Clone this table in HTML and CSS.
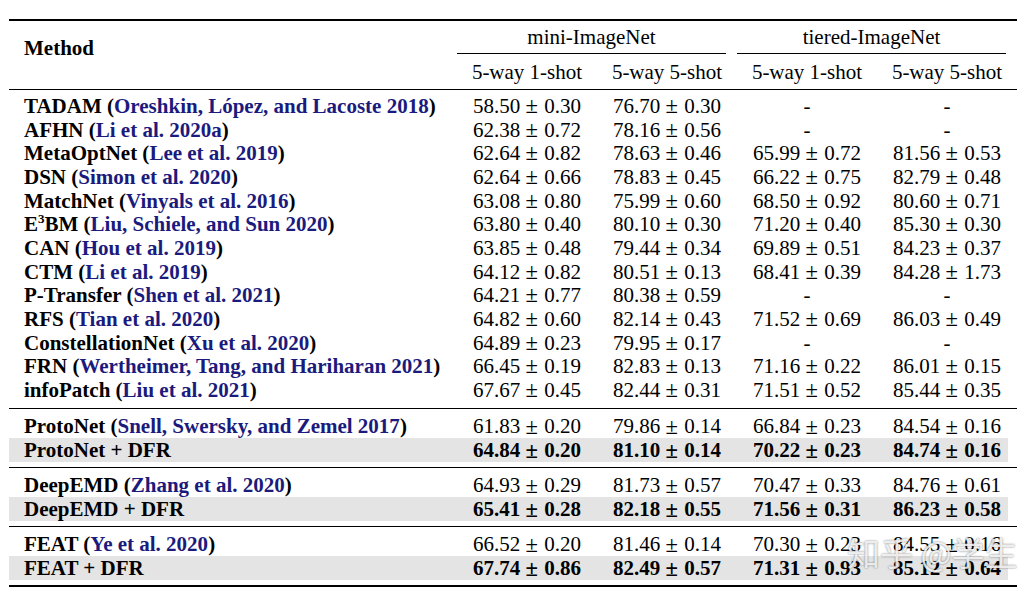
FILE: index.html
```html
<!DOCTYPE html>
<html>
<head>
<meta charset="utf-8">
<link rel="stylesheet" href="styles.css">
</head>
<body>
<div class="table">
  <div class="rule thick"></div>
  <div class="head">
    <div class="method">Method</div>
    <div class="grp grp-mini">mini-ImageNet</div>
    <div class="grp grp-tiered">tiered-ImageNet</div>
    <div class="sub">5-way 1-shot</div>
    <div class="sub">5-way 5-shot</div>
    <div class="sub">5-way 1-shot</div>
    <div class="sub">5-way 5-shot</div>
  </div>
  <div class="rule"></div>
  <div class="section main">
    <div class="row"><div class="m">TADAM (<span class="cite">Oreshkin, López, and Lacoste 2018</span>)</div><div class="v">58.50<span class="pm">±</span>0.30</div><div class="v">76.70<span class="pm">±</span>0.30</div><div class="v">-</div><div class="v">-</div></div>
    <div class="row"><div class="m">AFHN (<span class="cite">Li et al. 2020a</span>)</div><div class="v">62.38<span class="pm">±</span>0.72</div><div class="v">78.16<span class="pm">±</span>0.56</div><div class="v">-</div><div class="v">-</div></div>
    <div class="row"><div class="m">MetaOptNet (<span class="cite">Lee et al. 2019</span>)</div><div class="v">62.64<span class="pm">±</span>0.82</div><div class="v">78.63<span class="pm">±</span>0.46</div><div class="v">65.99<span class="pm">±</span>0.72</div><div class="v">81.56<span class="pm">±</span>0.53</div></div>
    <div class="row"><div class="m">DSN (<span class="cite">Simon et al. 2020</span>)</div><div class="v">62.64<span class="pm">±</span>0.66</div><div class="v">78.83<span class="pm">±</span>0.45</div><div class="v">66.22<span class="pm">±</span>0.75</div><div class="v">82.79<span class="pm">±</span>0.48</div></div>
    <div class="row"><div class="m">MatchNet (<span class="cite">Vinyals et al. 2016</span>)</div><div class="v">63.08<span class="pm">±</span>0.80</div><div class="v">75.99<span class="pm">±</span>0.60</div><div class="v">68.50<span class="pm">±</span>0.92</div><div class="v">80.60<span class="pm">±</span>0.71</div></div>
    <div class="row"><div class="m">E<sup>3</sup>BM (<span class="cite">Liu, Schiele, and Sun 2020</span>)</div><div class="v">63.80<span class="pm">±</span>0.40</div><div class="v">80.10<span class="pm">±</span>0.30</div><div class="v">71.20<span class="pm">±</span>0.40</div><div class="v">85.30<span class="pm">±</span>0.30</div></div>
    <div class="row"><div class="m">CAN (<span class="cite">Hou et al. 2019</span>)</div><div class="v">63.85<span class="pm">±</span>0.48</div><div class="v">79.44<span class="pm">±</span>0.34</div><div class="v">69.89<span class="pm">±</span>0.51</div><div class="v">84.23<span class="pm">±</span>0.37</div></div>
    <div class="row"><div class="m">CTM (<span class="cite">Li et al. 2019</span>)</div><div class="v">64.12<span class="pm">±</span>0.82</div><div class="v">80.51<span class="pm">±</span>0.13</div><div class="v">68.41<span class="pm">±</span>0.39</div><div class="v">84.28<span class="pm">±</span>1.73</div></div>
    <div class="row"><div class="m">P-Transfer (<span class="cite">Shen et al. 2021</span>)</div><div class="v">64.21<span class="pm">±</span>0.77</div><div class="v">80.38<span class="pm">±</span>0.59</div><div class="v">-</div><div class="v">-</div></div>
    <div class="row"><div class="m">RFS (<span class="cite">Tian et al. 2020</span>)</div><div class="v">64.82<span class="pm">±</span>0.60</div><div class="v">82.14<span class="pm">±</span>0.43</div><div class="v">71.52<span class="pm">±</span>0.69</div><div class="v">86.03<span class="pm">±</span>0.49</div></div>
    <div class="row"><div class="m">ConstellationNet (<span class="cite">Xu et al. 2020</span>)</div><div class="v">64.89<span class="pm">±</span>0.23</div><div class="v">79.95<span class="pm">±</span>0.17</div><div class="v">-</div><div class="v">-</div></div>
    <div class="row"><div class="m">FRN (<span class="cite">Wertheimer, Tang, and Hariharan 2021</span>)</div><div class="v">66.45<span class="pm">±</span>0.19</div><div class="v">82.83<span class="pm">±</span>0.13</div><div class="v">71.16<span class="pm">±</span>0.22</div><div class="v">86.01<span class="pm">±</span>0.15</div></div>
    <div class="row"><div class="m">infoPatch (<span class="cite">Liu et al. 2021</span>)</div><div class="v">67.67<span class="pm">±</span>0.45</div><div class="v">82.44<span class="pm">±</span>0.31</div><div class="v">71.51<span class="pm">±</span>0.52</div><div class="v">85.44<span class="pm">±</span>0.35</div></div>
  </div>
  <div class="rule"></div>
  <div class="section pair">
    <div class="row"><div class="m">ProtoNet (<span class="cite">Snell, Swersky, and Zemel 2017</span>)</div><div class="v">61.83<span class="pm">±</span>0.20</div><div class="v">79.86<span class="pm">±</span>0.14</div><div class="v">66.84<span class="pm">±</span>0.23</div><div class="v">84.54<span class="pm">±</span>0.16</div></div>
    <div class="row ours"><div class="m">ProtoNet + DFR</div><div class="v">64.84<span class="pm">±</span>0.20</div><div class="v">81.10<span class="pm">±</span>0.14</div><div class="v">70.22<span class="pm">±</span>0.23</div><div class="v">84.74<span class="pm">±</span>0.16</div></div>
  </div>
  <div class="rule"></div>
  <div class="section pair">
    <div class="row"><div class="m">DeepEMD (<span class="cite">Zhang et al. 2020</span>)</div><div class="v">64.93<span class="pm">±</span>0.29</div><div class="v">81.73<span class="pm">±</span>0.57</div><div class="v">70.47<span class="pm">±</span>0.33</div><div class="v">84.76<span class="pm">±</span>0.61</div></div>
    <div class="row ours"><div class="m">DeepEMD + DFR</div><div class="v">65.41<span class="pm">±</span>0.28</div><div class="v">82.18<span class="pm">±</span>0.55</div><div class="v">71.56<span class="pm">±</span>0.31</div><div class="v">86.23<span class="pm">±</span>0.58</div></div>
  </div>
  <div class="rule"></div>
  <div class="section pair">
    <div class="row"><div class="m">FEAT (<span class="cite">Ye et al. 2020</span>)</div><div class="v">66.52<span class="pm">±</span>0.20</div><div class="v">81.46<span class="pm">±</span>0.14</div><div class="v">70.30<span class="pm">±</span>0.23</div><div class="v">84.55<span class="pm">±</span>0.16</div></div>
    <div class="row ours"><div class="m">FEAT + DFR</div><div class="v">67.74<span class="pm">±</span>0.86</div><div class="v">82.49<span class="pm">±</span>0.57</div><div class="v">71.31<span class="pm">±</span>0.93</div><div class="v">85.12<span class="pm">±</span>0.64</div></div>
  </div>
  <div class="rule thick"></div>
  <div class="watermark">知乎 @学生</div>
</div>
</body>
</html>
```
FILE: styles.css
```css
html, body {
  margin: 0;
  padding: 0;
  background: #ffffff;
}

body {
  font-family: "Liberation Serif", "Times New Roman", serif;
  font-size: 21px;
  color: #000;
}

.table {
  position: relative;
  width: 1008px;
  margin: 19px 0 0 9px;
}

.rule {
  height: 1px;
  background: #000;
}

.rule.thick {
  height: 2px;
}

.head {
  display: grid;
  grid-template-columns: 448px repeat(4, 140px);
  grid-template-rows: 33px 35px;
  line-height: 23px;
}

.method {
  grid-row: 1 / 3;
  grid-column: 1;
  padding: 16px 0 0 15px;
  font-weight: bold;
}

.grp {
  grid-row: 1;
  padding-top: 5px;
  border-bottom: 1px solid #000;
  text-align: center;
  box-sizing: border-box;
  height: 33px;
}

.grp-mini {
  grid-column: 2 / 4;
  margin-right: 11px;
}

.grp-tiered {
  grid-column: 4 / 6;
  margin-right: 11px;
}

.sub {
  grid-row: 2;
  padding-top: 7px;
  text-align: center;
  white-space: nowrap;
}

.section.main {
  padding: 5px 0 5px;
}

.section.main .row {
  height: 23.67px;
  line-height: 23.67px;
}

.section.pair {
  padding: 5px 0;
}

.section.pair .row {
  height: 24px;
  line-height: 24px;
}

.row {
  display: grid;
  grid-template-columns: 448px repeat(4, 140px);
  white-space: nowrap;
}

.row .m {
  padding-left: 15px;
  font-weight: bold;
}

.row .v {
  text-align: center;
}

.cite {
  color: #1b1b7d;
}

.pm {
  display: inline-block;
  margin: 0 0.3em;
  transform: scale(1.08);
}

sup {
  font-size: 13px;
  line-height: 0;
  vertical-align: 8px;
}

.row.ours {
  font-weight: bold;
  background: linear-gradient(to right, #e4e4e4 calc(100% - 9px), transparent 0);
}

.watermark {
  position: absolute;
  left: 838px;
  top: 512px;
  font-family: "Noto Sans CJK SC", "Noto Sans", sans-serif;
  font-size: 33px;
  line-height: 42px;
  color: rgba(255, 255, 255, 0.85);
  text-shadow: 0 0 2px rgba(0, 0, 0, 0.55);
  white-space: nowrap;
  pointer-events: none;
}
```
